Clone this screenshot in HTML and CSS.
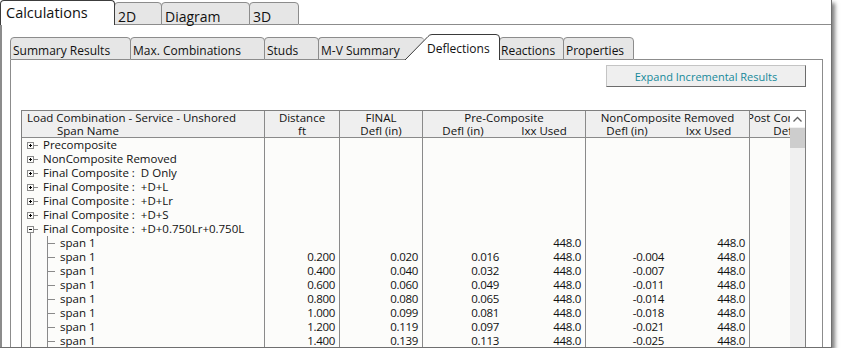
FILE: index.html
```html
<!DOCTYPE html>
<html lang="en">
<head>
  <meta charset="UTF-8" />
  <title>Calculations - Deflections</title>
  <link rel="stylesheet" href="styles.css">
</head>
<body>

  <div class="window">

    <!-- Main tabs -->
    <div class="main-tabs">
      <div class="main-tab active">Calculations</div>
      <div class="main-tab t-2d">2D</div>
      <div class="main-tab t-diagram">Diagram</div>
      <div class="main-tab t-3d">3D</div>
      <div class="tab-fill"></div>
    </div>

    <div class="main-panel">

      <!-- Result tabs -->
      <div class="sub-tabs">
        <div class="sub-tab t-summary">Summary Results</div>
        <div class="sub-tab t-max">Max. Combinations</div>
        <div class="sub-tab t-studs">Studs</div>
        <div class="sub-tab t-mv">M-V Summary</div>
        <div class="sub-tab active t-defl">
          <svg class="tab-shape" width="95" height="26" viewBox="0 0 95 26">
            <path d="M0 26 L23 2.5 Q24.5 0.5 27 0.5 L91 0.5 Q94.5 0.5 94.5 4 L94.5 26" fill="#fff" stroke="#3a3a3a" stroke-width="1"/>
          </svg>
          <span class="tab-label">Deflections</span>
        </div>
        <div class="sub-tab t-react">Reactions</div>
        <div class="sub-tab t-props">Properties</div>
        <div class="tab-fill"></div>
      </div>

      <div class="sub-panel">
        <div class="toolbar">
          <button class="btn-expand">Expand Incremental Results</button>
        </div>

        <!-- Deflection grid -->
        <div class="grid">
          <div class="grid-view">
            <div class="row head">
              <div class="cell sep head-load">Load Combination - Service - Unshored</div>
              <div class="cell sep center">Distance</div>
              <div class="cell sep center">FINAL</div>
              <div class="cell sep center span2">Pre-Composite</div>
              <div class="cell sep center span2">NonComposite Removed</div>
              <div class="cell center post post-title">Post Composite</div>
            </div>
            <div class="row head head-2">
              <div class="cell sep head-span">Span Name</div>
              <div class="cell sep center">ft</div>
              <div class="cell sep center">Defl (in)</div>
              <div class="cell center">Defl (in)</div>
              <div class="cell sep center">Ixx Used</div>
              <div class="cell center">Defl (in)</div>
              <div class="cell sep center">Ixx Used</div>
              <div class="cell center post">Defl (in)</div>
            </div>

            <div class="row">
              <div class="cell sep tree"><i class="box plus"></i>Precomposite</div>
              <div class="cell sep"></div><div class="cell sep"></div><div class="cell"></div><div class="cell sep"></div><div class="cell"></div><div class="cell sep"></div><div class="cell"></div>
            </div>
            <div class="row">
              <div class="cell sep tree"><i class="box plus"></i>NonComposite Removed</div>
              <div class="cell sep"></div><div class="cell sep"></div><div class="cell"></div><div class="cell sep"></div><div class="cell"></div><div class="cell sep"></div><div class="cell"></div>
            </div>
            <div class="row">
              <div class="cell sep tree"><i class="box plus"></i>Final Composite :&nbsp; D Only</div>
              <div class="cell sep"></div><div class="cell sep"></div><div class="cell"></div><div class="cell sep"></div><div class="cell"></div><div class="cell sep"></div><div class="cell"></div>
            </div>
            <div class="row">
              <div class="cell sep tree"><i class="box plus"></i>Final Composite :&nbsp; +D+L</div>
              <div class="cell sep"></div><div class="cell sep"></div><div class="cell"></div><div class="cell sep"></div><div class="cell"></div><div class="cell sep"></div><div class="cell"></div>
            </div>
            <div class="row">
              <div class="cell sep tree"><i class="box plus"></i>Final Composite :&nbsp; +D+Lr</div>
              <div class="cell sep"></div><div class="cell sep"></div><div class="cell"></div><div class="cell sep"></div><div class="cell"></div><div class="cell sep"></div><div class="cell"></div>
            </div>
            <div class="row">
              <div class="cell sep tree"><i class="box plus"></i>Final Composite :&nbsp; +D+S</div>
              <div class="cell sep"></div><div class="cell sep"></div><div class="cell"></div><div class="cell sep"></div><div class="cell"></div><div class="cell sep"></div><div class="cell"></div>
            </div>
            <div class="row">
              <div class="cell sep tree open"><i class="box"></i>Final Composite :&nbsp; +D+0.750Lr+0.750L</div>
              <div class="cell sep"></div><div class="cell sep"></div><div class="cell"></div><div class="cell sep"></div><div class="cell"></div><div class="cell sep"></div><div class="cell"></div>
            </div>

            <div class="row">
              <div class="cell sep leaf">span 1</div>
              <div class="cell sep num"></div><div class="cell sep num"></div><div class="cell num"></div><div class="cell sep num">448.0</div><div class="cell num"></div><div class="cell sep num">448.0</div><div class="cell"></div>
            </div>
            <div class="row">
              <div class="cell sep leaf">span 1</div>
              <div class="cell sep num">0.200</div><div class="cell sep num">0.020</div><div class="cell num">0.016</div><div class="cell sep num">448.0</div><div class="cell num">-0.004</div><div class="cell sep num">448.0</div><div class="cell"></div>
            </div>
            <div class="row">
              <div class="cell sep leaf">span 1</div>
              <div class="cell sep num">0.400</div><div class="cell sep num">0.040</div><div class="cell num">0.032</div><div class="cell sep num">448.0</div><div class="cell num">-0.007</div><div class="cell sep num">448.0</div><div class="cell"></div>
            </div>
            <div class="row">
              <div class="cell sep leaf">span 1</div>
              <div class="cell sep num">0.600</div><div class="cell sep num">0.060</div><div class="cell num">0.049</div><div class="cell sep num">448.0</div><div class="cell num">-0.011</div><div class="cell sep num">448.0</div><div class="cell"></div>
            </div>
            <div class="row">
              <div class="cell sep leaf">span 1</div>
              <div class="cell sep num">0.800</div><div class="cell sep num">0.080</div><div class="cell num">0.065</div><div class="cell sep num">448.0</div><div class="cell num">-0.014</div><div class="cell sep num">448.0</div><div class="cell"></div>
            </div>
            <div class="row">
              <div class="cell sep leaf">span 1</div>
              <div class="cell sep num">1.000</div><div class="cell sep num">0.099</div><div class="cell num">0.081</div><div class="cell sep num">448.0</div><div class="cell num">-0.018</div><div class="cell sep num">448.0</div><div class="cell"></div>
            </div>
            <div class="row">
              <div class="cell sep leaf">span 1</div>
              <div class="cell sep num">1.200</div><div class="cell sep num">0.119</div><div class="cell num">0.097</div><div class="cell sep num">448.0</div><div class="cell num">-0.021</div><div class="cell sep num">448.0</div><div class="cell"></div>
            </div>
            <div class="row">
              <div class="cell sep leaf">span 1</div>
              <div class="cell sep num">1.400</div><div class="cell sep num">0.139</div><div class="cell num">0.113</div><div class="cell sep num">448.0</div><div class="cell num">-0.025</div><div class="cell sep num">448.0</div><div class="cell"></div>
            </div>
          </div>

          <div class="scrollbar">
            <div class="scroll-up">
              <svg width="15" height="16" viewBox="0 0 15 16">
                <polyline points="3.5,10.5 7.5,6.5 11.5,10.5" fill="none" stroke="#606060" stroke-width="1.3"/>
              </svg>
            </div>
            <div class="scroll-thumb"></div>
          </div>
        </div>
      </div>
    </div>
  </div>

</body>
</html>
```

FILE: styles.css
```css
* {
  box-sizing: border-box;
}
body {
  margin: 0;
  background-color: #fff;
  font-family: "Open Sans", "Noto Sans", sans-serif;
  color: #111;
}
.window {
  width: 832px;
  height: 348px;
  overflow: hidden;
  background-color: #fff;
  border-right: 1px solid #6f6f6f;
  border-bottom: 1px solid #6f6f6f;
  box-shadow: 3px 3px 4px rgba(0,0,0,0.5);
}

/* main tabs */
.main-tabs {
  display: flex;
  align-items: flex-end;
  height: 25px;
}
.main-tab {
  height: 23px;
  margin-left: -1px;
  padding: 2px 0 0 3px;
  font-size: 14px;
  line-height: 23px;
  background-color: #e6e6e6;
  border: 1px solid #8c8c8c;
  border-radius: 4px 4px 0 0;
  white-space: nowrap;
}
.main-tab.active {
  position: relative;
  z-index: 1;
  height: 25px;
  margin-left: 0;
  width: 115px;
  padding: 2px 0 0 5px;
  font-size: 14.5px;
  line-height: 19px;
  background-color: #fff;
  border-color: #3c3c3c;
  border-bottom: none;
}
.t-2d { width: 48px; }
.t-diagram { width: 89px; }
.t-3d { width: 50px; }
.tab-fill {
  flex: 1;
  border-bottom: 1px solid #8c8c8c;
}
.main-panel {
  border-left: 2px solid #8c8c8c;
  padding: 9px 8px 0 8px;
}

/* result tabs */
.sub-tabs {
  display: flex;
  align-items: flex-end;
  height: 26px;
}
.sub-tab {
  height: 23px;
  margin-left: -1px;
  padding: 2px 0 0 2px;
  font-size: 12px;
  line-height: 22px;
  background-color: #e6e6e6;
  border: 1px solid #8c8c8c;
  border-radius: 4px 4px 0 0;
  white-space: nowrap;
}
.sub-tab:first-child {
  margin-left: 0;
}
.t-summary { width: 121px; }
.t-max { width: 135px; }
.t-studs { width: 55px; }
.t-mv { width: 106px; border-right: none; }
.t-react { width: 65px; padding-left: 1px; }
.t-props { width: 71px; }
.sub-tab.active {
  position: relative;
  width: 95px;
  height: 26px;
  margin-left: -19px;
  padding: 2px 0 0 22px;
  line-height: 26px;
  background: none;
  border: none;
}
.tab-shape {
  position: absolute;
  left: 0;
  top: 0;
}
.tab-label {
  position: relative;
}
.sub-panel {
  border: 1px solid #8c8c8c;
  border-top: none;
  padding: 5px 16px 0 10px;
}
.toolbar {
  display: flex;
  justify-content: flex-end;
  margin-bottom: 23px;
}
.btn-expand {
  width: 200px;
  height: 22px;
  padding: 0;
  background-color: #efefef;
  border: 1px solid #c4c4c4;
  border-right-color: #6c6c6c;
  border-bottom-color: #6c6c6c;
  color: #16899a;
  font-family: inherit;
  font-size: 11px;
}

/* grid */
.grid {
  display: flex;
  border: 1px solid #7f7f7f;
  background-color: #fcfcfa;
}
.grid-view {
  width: 768px;
  overflow: hidden;
}
.row {
  display: grid;
  grid-template-columns: 243px 75px 83px 80px 83px 82px 82px 88px;
  height: 14px;
  font-size: 11.5px;
  line-height: 14px;
}
.cell {
  padding: 0 4px;
  white-space: nowrap;
  overflow: hidden;
}
.sep {
  border-right: 1px solid #8a8a8a;
}
.center {
  text-align: center;
}
.num {
  text-align: right;
  letter-spacing: -0.3px;
}
.span2 {
  grid-column: span 2;
}
.post {
  padding: 0;
}
.post-title {
  text-align: left;
  text-indent: -3px;
}
.head {
  background-color: #efefef;
  height: 13px;
  line-height: 13px;
}
.head-2 {
  height: 14px;
  border-bottom: 1px solid #8a8a8a;
}
.head-load {
  padding-left: 5px;
}
.head-span {
  padding-left: 35px;
}

/* tree column */
.tree {
  display: flex;
  padding-left: 5px;
  background: linear-gradient(#8a8a8a, #8a8a8a) 12px 7px / 4px 1px no-repeat;
}
.tree.open {
  background:
    linear-gradient(#8a8a8a, #8a8a8a) 12px 7px / 4px 1px no-repeat,
    linear-gradient(#8a8a8a, #8a8a8a) 8px 11px / 1px 3px no-repeat;
}
.box {
  flex: none;
  width: 7px;
  height: 7px;
  margin: 4px 9px 0 0;
  border: 1px solid #8a8a8a;
  background: linear-gradient(#000, #000) center / 3px 1px no-repeat;
}
.box.plus {
  background:
    linear-gradient(#000, #000) center / 3px 1px no-repeat,
    linear-gradient(#000, #000) center / 1px 3px no-repeat;
}
.leaf {
  padding-left: 38px;
  background:
    linear-gradient(#8a8a8a, #8a8a8a) 8px 0 / 1px 100% no-repeat,
    linear-gradient(#8a8a8a, #8a8a8a) 25px 0 / 1px 100% no-repeat,
    linear-gradient(#8a8a8a, #8a8a8a) 25px 7px / 8px 1px no-repeat;
}

/* scrollbar */
.scrollbar {
  width: 15px;
  background-color: #f0f0f0;
}
.scroll-up {
  height: 16px;
  background-color: #fff;
}
.scroll-up svg {
  display: block;
}
.scroll-thumb {
  height: 20px;
  margin-top: 1px;
  background-color: #cdcdcd;
}
```
